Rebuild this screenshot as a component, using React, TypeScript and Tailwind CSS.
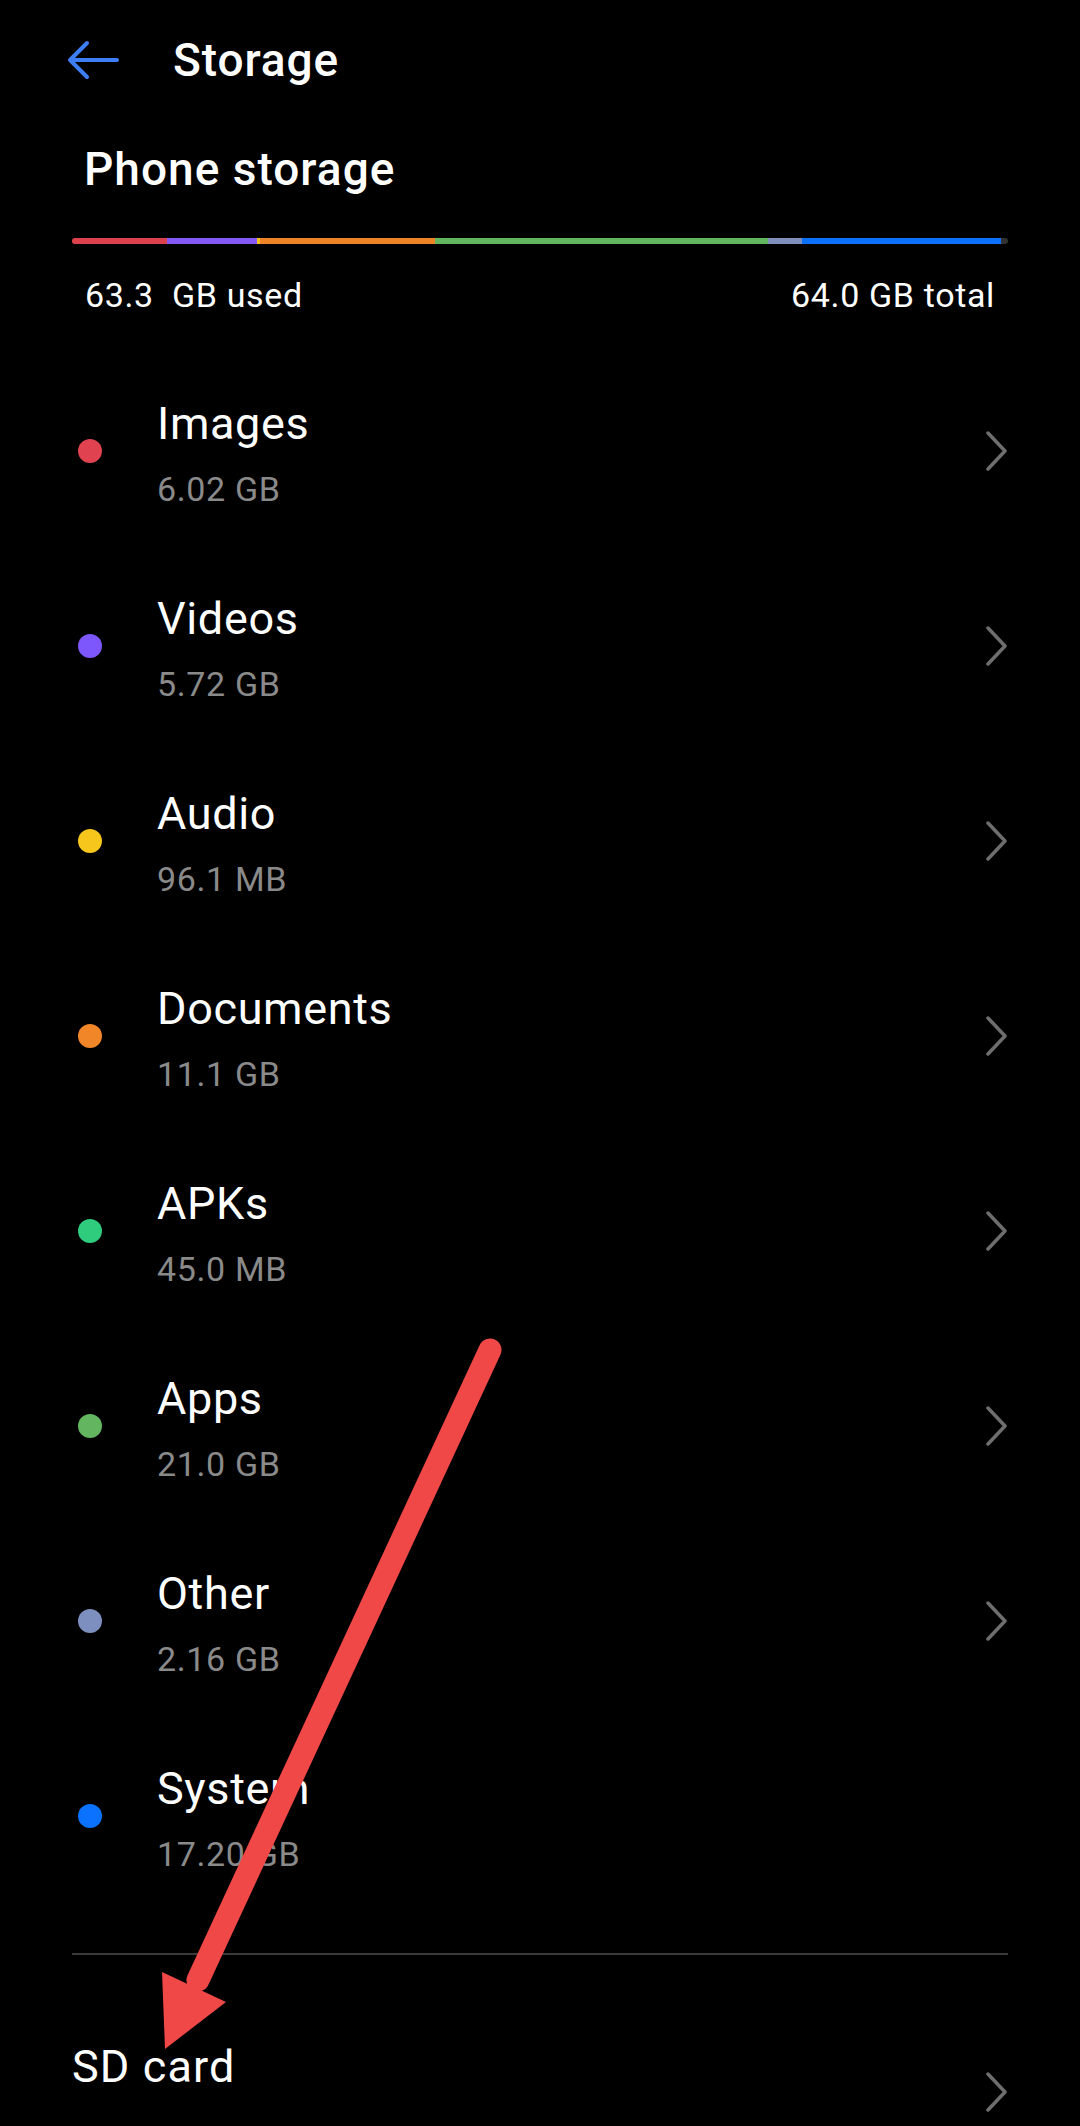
const segments = [
  { color: 'bg-[#dc414c]', width: 95 },
  { color: 'bg-[#8458f5]', width: 90 },
  { color: 'bg-[#f4c21f]', width: 3 },
  { color: 'bg-[#ef8426]', width: 175 },
  { color: 'bg-[#63b660]', width: 333 },
  { color: 'bg-[#7f8fbb]', width: 34 },
  { color: 'bg-[#0b70fb]', width: 199 },
];

const categories = [
  { name: 'Images', size: '6.02 GB', dot: 'bg-[#e0434f]', chevron: true },
  { name: 'Videos', size: '5.72 GB', dot: 'bg-[#7d57fb]', chevron: true },
  { name: 'Audio', size: '96.1 MB', dot: 'bg-[#f6c61c]', chevron: true },
  { name: 'Documents', size: '11.1 GB', dot: 'bg-[#f18628]', chevron: true },
  { name: 'APKs', size: '45.0 MB', dot: 'bg-[#2fcc7d]', chevron: true },
  { name: 'Apps', size: '21.0 GB', dot: 'bg-[#63b65f]', chevron: true },
  { name: 'Other', size: '2.16 GB', dot: 'bg-[#7d8fbe]', chevron: true },
  { name: 'System', size: '17.20 GB', dot: 'bg-[#0a72ff]', chevron: false },
];

function Chevron() {
  return (
    <svg width="24" height="40" viewBox="0 0 24 40" fill="none">
      <path d="M4 2 L21 20 L4 38" stroke="#6e6e6e" strokeWidth="3.5" strokeLinecap="round" strokeLinejoin="round" />
    </svg>
  );
}

export default function App() {
  return (
    <div
      className="relative h-[2126px] w-[1080px] overflow-hidden bg-black text-white tracking-[0.04em]"
      style={{ fontFamily: 'Roboto, "Noto Sans", sans-serif' }}
    >
      {/* Header */}
      <div className="flex h-[120px] items-center pl-[67px]">
        <svg width="52" height="40" viewBox="0 0 52 40" fill="none">
          <path d="M50 20 H4 M20 3 L3 20 L20 37" stroke="#3d7ef5" strokeWidth="4" strokeLinecap="round" strokeLinejoin="round" />
        </svg>
        <h1 className="ml-[54px] text-[46px] font-medium leading-[56px] tracking-[0.02em]">Storage</h1>
      </div>

      <div className="px-[72px]">
        {/* Summary */}
        <div className="pt-[21px] pl-[12px] text-[46px] font-medium leading-[56px] tracking-[0.022em]">Phone storage</div>

        <div className="mt-[41px] flex h-[6px] w-full overflow-hidden rounded-full bg-[#333333]">
          {segments.map((s, i) => (
            <div key={i} className={`h-full ${s.color}`} style={{ width: s.width }} />
          ))}
        </div>

        <div className="mt-[31px] flex justify-between px-[13px] text-[34px] leading-[40px]">
          <span className="whitespace-pre">63.3  GB used</span>
          <span>64.0 GB total</span>
        </div>

        {/* Categories */}
        <div className="mt-[38px]">
          {categories.map((c) => (
            <div key={c.name} className="flex h-[195px] items-center">
              <div className={`ml-[6px] h-[24px] w-[24px] shrink-0 rounded-full ${c.dot}`} />
              <div className="ml-[55px] flex-1 pt-[8px]">
                <div className="text-[45px] leading-[56px]">{c.name}</div>
                <div className="mt-[13px] text-[34px] leading-[48px] text-[#8a8a8a]">{c.size}</div>
              </div>
              {c.chevron && <Chevron />}
            </div>
          ))}
        </div>

        <div className="mt-[40px] h-[2px] bg-[#3a3a3a]" />

        {/* SD card */}
        <div className="mt-[84px] flex justify-between">
          <div className="text-[45px] leading-[56px] tracking-[0.025em]">SD card</div>
          <div className="mt-[33px]">
            <Chevron />
          </div>
        </div>
      </div>

      {/* Annotation arrow */}
      <svg
        className="pointer-events-none absolute left-0 top-0"
        width="1080"
        height="2126"
        viewBox="0 0 1080 2126"
        fill="none"
      >
        <line x1="490" y1="1350" x2="198" y2="1980" stroke="#f04747" strokeWidth="23" strokeLinecap="round" />
        <polygon points="165,2049 162,1972 226,2002" fill="#f04747" />
      </svg>
    </div>
  );
}
